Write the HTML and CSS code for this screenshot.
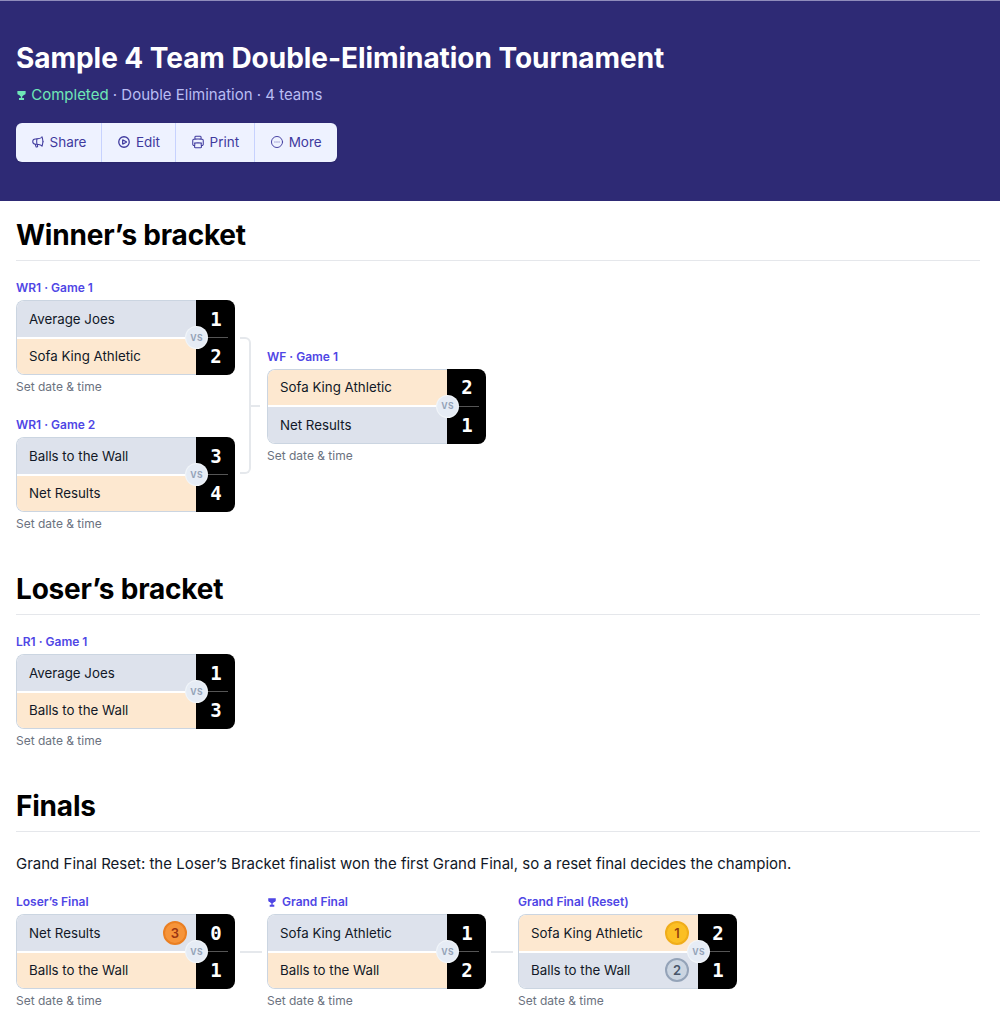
FILE: index.html
```html
<!DOCTYPE html>
<html lang="en">
<head>
  <meta charset="UTF-8" />
  <meta name="viewport" content="width=device-width, initial-scale=1.0"/>
  <title>Sample 4 Team Double-Elimination Tournament</title>
  <link rel="stylesheet" href="styles.css">
</head>
<body>

  <header class="hero">
    <h1>Sample 4 Team Double-Elimination Tournament</h1>
    <p class="hero-meta">
      <svg class="icon-trophy" viewBox="0 0 24 24" fill="currentColor"><path d="M3 2h18v5c0 2-1.500 3.500-4 4-.8 1.500-2 2.500-3.500 3v3.500h4V22h-11v-4.500h4V14C9 13.500 7.800 12.500 7 11 4.500 10.500 3 9 3 7z"/></svg>
      <span class="status">Completed</span> · Double Elimination · 4 teams
    </p>
    <div class="actions">
      <a href="#" class="action">
        <svg viewBox="0 0 24 24" fill="none" stroke="currentColor" stroke-width="1.800" stroke-linecap="round" stroke-linejoin="round"><path d="M10.34 15.84c-.688-.06-1.386-.09-2.09-.09H7.5a4.5 4.5 0 1 1 0-9h.75c.704 0 1.402-.03 2.09-.09m0 9.18c.253.962.584 1.892.985 2.783.247.55.06 1.21-.463 1.511l-.657.38c-.551.318-1.26.117-1.527-.461a20.845 20.845 0 0 1-1.44-4.282m3.102.069a18.03 18.03 0 0 1-.59-4.59c0-1.586.205-3.124.59-4.59m0 9.18a23.848 23.848 0 0 1 8.835 2.535M10.34 6.66a23.847 23.847 0 0 0 8.835-2.535m0 0A23.74 23.74 0 0 0 18.795 3m.38 1.125a23.91 23.91 0 0 1 1.014 5.395m-1.014 8.855c-.118.38-.245.754-.38 1.125m.38-1.125a23.91 23.91 0 0 0 1.014-5.395m0-3.46c.495.413.811 1.035.811 1.73 0 .695-.316 1.317-.811 1.73m0-3.46a24.347 24.347 0 0 1 0 3.46"/></svg>
        Share
      </a>
      <a href="#" class="action">
        <svg viewBox="0 0 24 24" fill="none" stroke="currentColor" stroke-width="2.200" stroke-linecap="round" stroke-linejoin="round"><path d="M21 12a9 9 0 1 1-18 0 9 9 0 0 1 18 0Z"/><path d="M15.910 11.672a.375.375 0 0 1 0 .656l-5.603 3.113a.375.375 0 0 1-.557-.328V8.887c0-.286.307-.466.557-.327l5.603 3.112Z"/></svg>
        Edit
      </a>
      <a href="#" class="action">
        <svg viewBox="0 0 24 24" fill="none" stroke="currentColor" stroke-width="1.800" stroke-linecap="round" stroke-linejoin="round"><path d="M6.720 13.829c-.24.03-.48.062-.72.096m.72-.096a42.415 42.415 0 0 1 10.560 0m-10.560 0L6.340 18m10.940-4.171c.24.03.48.062.72.096m-.72-.096L17.660 18m0 0 .229 2.523a1.125 1.125 0 0 1-1.120 1.227H7.231c-.662 0-1.180-.568-1.120-1.227L6.340 18m11.318 0h1.091A2.250 2.250 0 0 0 21 15.750V9.456c0-1.081-.768-2.015-1.837-2.175a48.055 48.055 0 0 0-1.913-.247M6.340 18H5.250A2.250 2.250 0 0 1 3 15.750V9.456c0-1.081.768-2.015 1.837-2.175a48.041 48.041 0 0 1 1.913-.247m10.500 0a48.536 48.536 0 0 0-10.500 0m10.500 0V3.375c0-.621-.504-1.125-1.125-1.125h-8.250c-.621 0-1.125.504-1.125 1.125v3.659"/></svg>
        Print
      </a>
      <a href="#" class="action">
        <svg viewBox="0 0 24 24" fill="none" stroke="currentColor" stroke-width="1.600" stroke-linecap="round"><circle cx="12" cy="12" r="9.500"/><path d="M8.500 12h.01M12 12h.01M15.500 12h.01"/></svg>
        More
      </a>
    </div>
  </header>

  <main class="content">

    <section class="bracket">
      <h2>Winner’s bracket</h2>
      <div class="rounds">
        <div class="round">
          <div class="game">
            <div class="game-label">WR1 · Game 1</div>
            <div class="match">
              <div class="teams">
                <div class="team loser"><span>Average Joes</span></div>
                <div class="team winner"><span>Sofa King Athletic</span></div>
              </div>
              <div class="scores"><span>1</span><span>2</span></div>
              <div class="vs">VS</div>
            </div>
            <div class="game-date">Set date &amp; time</div>
          </div>
          <div class="game">
            <div class="game-label">WR1 · Game 2</div>
            <div class="match">
              <div class="teams">
                <div class="team loser"><span>Balls to the Wall</span></div>
                <div class="team winner"><span>Net Results</span></div>
              </div>
              <div class="scores"><span>3</span><span>4</span></div>
              <div class="vs">VS</div>
            </div>
            <div class="game-date">Set date &amp; time</div>
          </div>
        </div>
        <div class="join"><div class="join-fork"></div></div>
        <div class="game">
          <div class="game-label">WF · Game 1</div>
          <div class="match">
            <div class="teams">
              <div class="team winner"><span>Sofa King Athletic</span></div>
              <div class="team loser"><span>Net Results</span></div>
            </div>
            <div class="scores"><span>2</span><span>1</span></div>
            <div class="vs">VS</div>
          </div>
          <div class="game-date">Set date &amp; time</div>
        </div>
      </div>
    </section>

    <section class="bracket">
      <h2>Loser’s bracket</h2>
      <div class="rounds">
        <div class="game">
          <div class="game-label">LR1 · Game 1</div>
          <div class="match">
            <div class="teams">
              <div class="team loser"><span>Average Joes</span></div>
              <div class="team winner"><span>Balls to the Wall</span></div>
            </div>
            <div class="scores"><span>1</span><span>3</span></div>
            <div class="vs">VS</div>
          </div>
          <div class="game-date">Set date &amp; time</div>
        </div>
      </div>
    </section>

    <section class="bracket">
      <h2>Finals</h2>
      <p class="note">Grand Final Reset: the Loser’s Bracket finalist won the first Grand Final, so a reset final decides the champion.</p>
      <div class="rounds">
        <div class="game">
          <div class="game-label">Loser’s Final</div>
          <div class="match">
            <div class="teams">
              <div class="team loser"><span>Net Results</span><b class="medal bronze">3</b></div>
              <div class="team winner"><span>Balls to the Wall</span></div>
            </div>
            <div class="scores"><span>0</span><span>1</span></div>
            <div class="vs">VS</div>
          </div>
          <div class="game-date">Set date &amp; time</div>
        </div>
        <div class="link"></div>
        <div class="game">
          <div class="game-label">
            <svg class="icon-trophy" viewBox="0 0 24 24" fill="currentColor"><path d="M3 2h18v5c0 2-1.500 3.500-4 4-.8 1.500-2 2.500-3.500 3v3.500h4V22h-11v-4.500h4V14C9 13.500 7.800 12.500 7 11 4.500 10.500 3 9 3 7z"/></svg>
            Grand Final
          </div>
          <div class="match">
            <div class="teams">
              <div class="team loser"><span>Sofa King Athletic</span></div>
              <div class="team winner"><span>Balls to the Wall</span></div>
            </div>
            <div class="scores"><span>1</span><span>2</span></div>
            <div class="vs">VS</div>
          </div>
          <div class="game-date">Set date &amp; time</div>
        </div>
        <div class="link"></div>
        <div class="game">
          <div class="game-label">Grand Final (Reset)</div>
          <div class="match">
            <div class="teams">
              <div class="team winner"><span>Sofa King Athletic</span><b class="medal gold">1</b></div>
              <div class="team loser"><span>Balls to the Wall</span><b class="medal silver">2</b></div>
            </div>
            <div class="scores"><span>2</span><span>1</span></div>
            <div class="vs">VS</div>
          </div>
          <div class="game-date">Set date &amp; time</div>
        </div>
      </div>
    </section>

  </main>

</body>
</html>
```

FILE: styles.css
```css
* { box-sizing: border-box; }
body {
  font-family: Inter, 'Liberation Sans', sans-serif;
  margin: 0;
  background: #fff;
  color: #000;
}

.hero {
  background: #2e2a75;
  color: #fff;
  padding: 39px 16px 39px;
  border-top: 1px solid #8f8cbb;
}
.hero h1 {
  margin: 0;
  font-size: 28px;
  line-height: 36px;
  font-weight: 700;
  letter-spacing: -0.05px;
}
.hero-meta {
  margin: 7px 0 16px;
  font-size: 15px;
  line-height: 24px;
  color: #b9bdf3;
}
.hero-meta .icon-trophy {
  width: 11px;
  height: 11px;
  color: #6ee7b7;
  vertical-align: -1px;
}
.status {
  color: #6ee7b7;
}
.actions {
  display: inline-flex;
  vertical-align: top;
  height: 39px;
  background: #eef2ff;
  border-radius: 6px;
  box-shadow: 0 1px 2px rgba(0,0,0,0.1);
}
.action {
  display: flex;
  align-items: center;
  gap: 4.500px;
  padding: 0 15px 1px;
  font-size: 13.500px;
  font-weight: 400;
  color: #3f3a9e;
  text-decoration: none;
  border-left: 1px solid #c7d2fe;
}
.action:first-child {
  border-left: none;
}
.action svg {
  width: 14px;
  height: 14px;
}

.content {
  padding: 16px 20px 0 16px;
}
.bracket {
  margin-bottom: 39px;
}
.bracket h2 {
  margin: 0 0 20px;
  padding-bottom: 7px;
  font-size: 28px;
  line-height: 36px;
  font-weight: 700;
  letter-spacing: -0.2px;
  border-bottom: 1px solid #e5e7eb;
}
.note {
  margin: 0 0 19px;
  font-size: 15px;
  line-height: 24px;
  color: #111827;
}

.rounds {
  display: flex;
  align-items: center;
}
.round {
  display: flex;
  flex-direction: column;
  gap: 23px;
}
.game {
  width: 219px;
  flex: none;
}
.game-label {
  display: flex;
  align-items: flex-start;
  gap: 5px;
  height: 16px;
  margin-bottom: 3px;
  font-size: 12px;
  line-height: 14px;
  font-weight: 600;
  color: #4f46e5;
}
.game-label .icon-trophy {
  width: 10px;
  height: 11px;
  margin-top: 2px;
}
.game-date {
  margin-top: 4px;
  font-size: 12px;
  line-height: 15px;
  height: 16px;
  color: #6b7280;
}

.match {
  position: relative;
  display: flex;
  height: 75px;
  border-radius: 8px;
}
.teams {
  flex: 1;
  min-width: 0;
  display: flex;
  flex-direction: column;
  gap: 2px;
  background: #fff;
  border: 1px solid #cbd5e1;
  border-right: none;
  border-radius: 8px 0 0 8px;
  overflow: hidden;
}
.team {
  flex: 1;
  display: flex;
  align-items: center;
  justify-content: space-between;
  padding: 0 9px 0 12px;
  font-size: 13.300px;
  color: #111827;
}
.team.loser { background: #dde2ec; }
.team.winner { background: #fde8d0; }

.medal {
  width: 24px;
  height: 24px;
  border-radius: 50%;
  border: 2px solid;
  display: flex;
  align-items: center;
  justify-content: center;
  font-size: 13px;
  font-weight: 600;
}
.medal.gold { background: #fbbf24; border-color: #f0ad1a; color: #92400e; }
.medal.silver { background: #cbd5e1; border-color: #94a3b8; color: #475569; }
.medal.bronze { background: #f6943a; border-color: #ea7f22; color: #9a3412; }

.scores {
  width: 39px;
  flex: none;
  display: flex;
  flex-direction: column;
  background: #000;
  border-radius: 0 8px 8px 0;
  color: #fff;
  font-family: 'DejaVu Sans Mono', 'Liberation Mono', monospace;
  font-size: 19px;
  font-weight: 700;
  position: relative;
}
.scores span {
  flex: 1;
  display: flex;
  align-items: center;
  justify-content: center;
  padding-left: 1px;
}
.scores::after {
  content: "";
  position: absolute;
  left: 8px;
  right: 7px;
  top: 37px;
  height: 1px;
  background: #555;
}
.vs {
  position: absolute;
  right: 28px;
  top: 27px;
  width: 21px;
  height: 21px;
  border-radius: 50%;
  background: #e6ecf5;
  box-shadow: 0 0 0 1px #f1f5f9;
  display: flex;
  align-items: center;
  justify-content: center;
  font-size: 8.500px;
  font-weight: 700;
  color: #94a3b8;
  letter-spacing: 0.4px;
}

/* connector lines between rounds */
.join {
  align-self: stretch;
  width: 32px;
  flex: none;
  padding: 56px 0 58px 5px;
}
.join-fork {
  position: relative;
  width: 11px;
  height: 100%;
  border: 2px solid #e5e8ec;
  border-left: none;
  border-radius: 0 6px 6px 0;
}
.join-fork::after {
  content: "";
  position: absolute;
  left: 100%;
  top: 50%;
  width: 11px;
  height: 2px;
  margin-top: -1px;
  background: #e5e8ec;
}
.link {
  width: 22px;
  height: 2px;
  margin: 0 5px;
  background: #e5e8ec;
  flex: none;
}
```
